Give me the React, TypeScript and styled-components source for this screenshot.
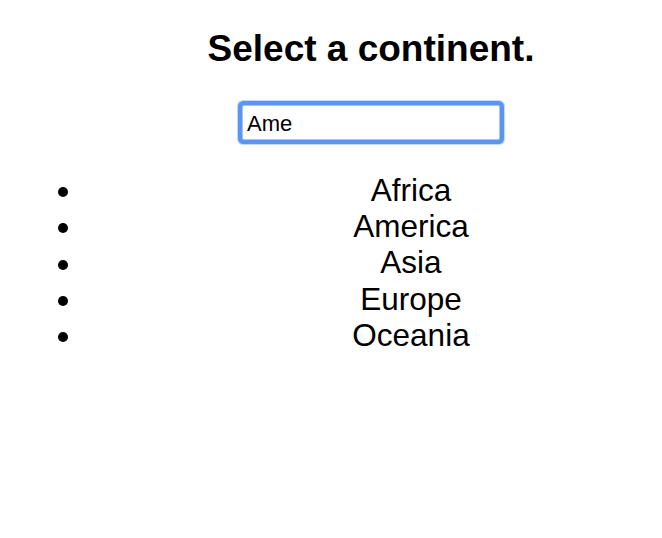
import { useState, ChangeEvent } from 'react';
import styled, { createGlobalStyle } from 'styled-components';

const continents: string[] = ['Africa', 'America', 'Asia', 'Europe', 'Oceania'];

export default function App() {
  //入力中の文字
  const [query, setQuery] = useState<string>('Ame');

  return (
    <>
      <GlobalStyle />
      <SPage>
        <STitle>Select a continent.</STitle>
        <SInputWrap>
          <SInput
            value={query}
            autoFocus
            onChange={(e: ChangeEvent<HTMLInputElement>) => setQuery(e.target.value)}
          />
        </SInputWrap>
        <SList>
          {continents.map((name) => (
            <SItem key={name}>
              <SBullet />
              <SLabel>{name}</SLabel>
            </SItem>
          ))}
        </SList>
      </SPage>
    </>
  );
}

const GlobalStyle = createGlobalStyle`
  html, body {
    margin: 0;
    padding: 0;
    background: #fff;
  }
  body {
    font-family: "Liberation Sans", Arial, Helvetica, sans-serif;
    color: #000;
  }
`;

const SPage = styled.div`
  width: 662px;
  height: 538px;
  overflow: hidden;
`;

const STitle = styled.h1`
  margin: 28px 0 0;
  padding-left: 80px;
  text-align: center;
  font-size: 37px;
  font-weight: 700;
  line-height: normal;
`;

const SInputWrap = styled.div`
  display: flex;
  justify-content: center;
  padding-left: 80px;
  margin-top: 35px;
`;

const SInput = styled.input`
  box-sizing: border-box;
  width: 258px;
  height: 35px;
  padding: 2px 4px 0;
  border: 1px solid #a8c4f2;
  border-radius: 2px;
  box-shadow: 0 0 0 4px #5c95f0, 0 0 1px 5px rgba(110, 160, 245, 0.45);
  outline: none;
  font-family: "Liberation Sans", Arial, sans-serif;
  font-size: 22px;
  color: #000;
  background: #fff;
`;

const SList = styled.ul`
  list-style: none;
  margin: 32px 0 0;
  padding: 0;
`;

const SItem = styled.li`
  display: flex;
  align-items: center;
  font-size: 31.5px;
  line-height: 36.2px;
`;

const SBullet = styled.span`
  flex: none;
  width: 10px;
  height: 10px;
  margin: 4px 0 0 58px;
  border-radius: 50%;
  background: #000;
`;

const SLabel = styled.span`
  flex: 1;
  margin-left: 92px;
  text-align: center;
`;
